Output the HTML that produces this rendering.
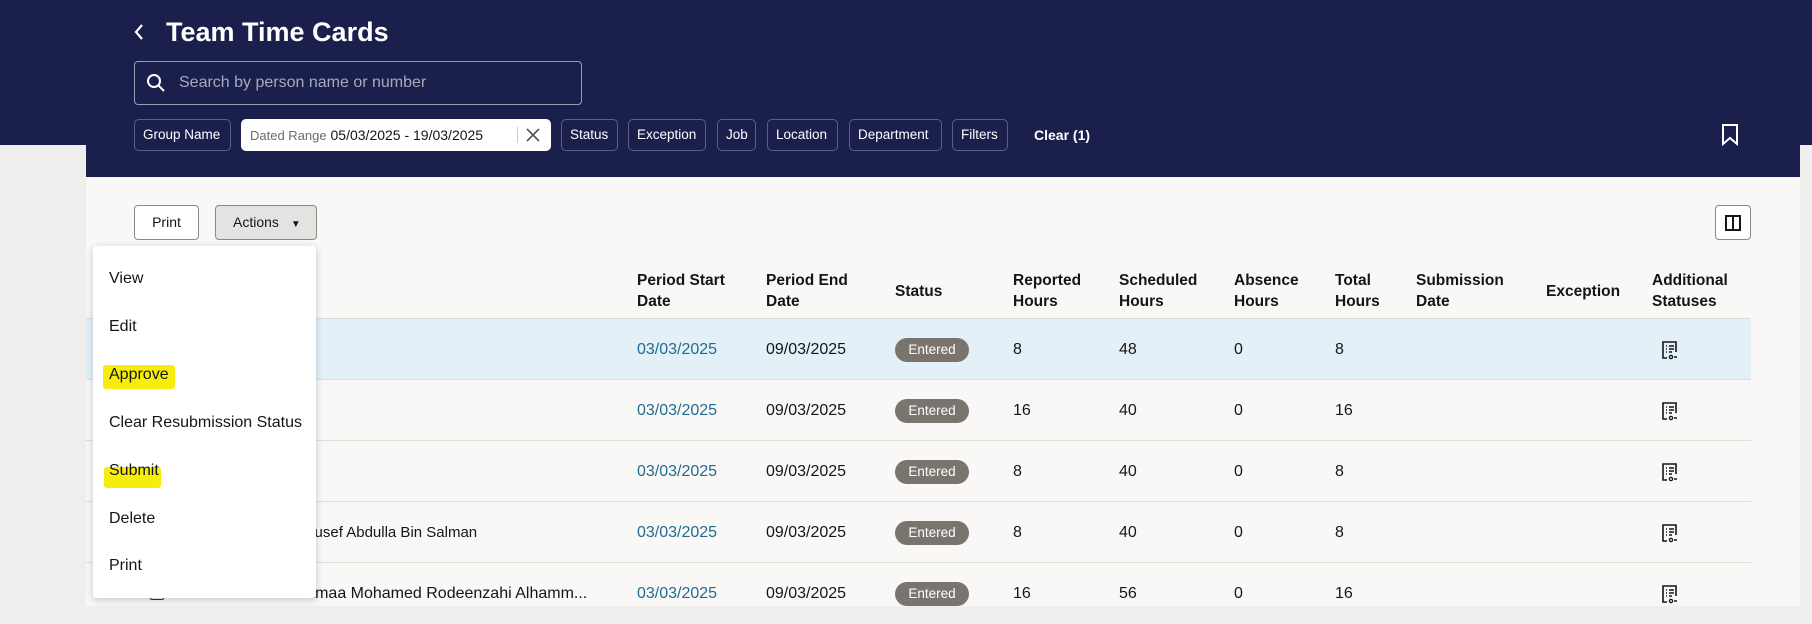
<!DOCTYPE html>
<html><head><meta charset="utf-8"><style>
*{margin:0;padding:0;box-sizing:border-box}
body{width:1812px;height:606px;overflow:hidden;background:#efeeec;font-family:"Liberation Sans",sans-serif;position:relative;color:#161513}
.a{position:absolute;white-space:nowrap}
.hdr{left:0;top:0;width:1812px;height:145px;background:#1a1f4c}
.panel{left:86px;top:145px;width:1714px;height:461px;background:#f9f8f6}
.hdr2{left:86px;top:145px;width:1714px;height:32px;background:#1a1f4c}
.chip{top:119px;height:32px;border:1px solid #5b6085;border-radius:5px;color:#fff;font-size:13.5px;line-height:30px;padding:0 8px}
.btn{top:205px;height:35px;border:1px solid #8b8985;border-radius:4px;font-size:14px;line-height:33px;text-align:center;background:#fff}
.th{font-size:15.5px;font-weight:bold;line-height:21px;color:#161513}
.row{left:86px;width:1665px;height:61px;border-bottom:1px solid #dfdedb}
.c{font-size:16px;line-height:20px}
.lnk{color:#1f6c91}
.badge{width:74px;height:24px;border-radius:12px;background:#7a746e;color:#fff;font-size:13.5px;line-height:24px;text-align:center}
.menu{left:93px;top:246px;width:223px;height:352px;background:#fff;border-radius:3px;box-shadow:0 2px 8px rgba(0,0,0,.2)}
.mi{left:109px;font-size:16px;line-height:20px}
.hl{background:#f7ed0c}
</style></head><body>
<div class="a hdr"></div>
<div class="a panel"></div>
<div class="a hdr2"></div>
<svg class="a" style="left:133px;top:23px" width="12" height="18" viewBox="0 0 12 18"><path d="M9 2L3 9l6 7" stroke="#fff" stroke-width="2.2" fill="none"/></svg>
<div class="a" style="left:166px;top:16px;font-size:27px;font-weight:bold;color:#fff;line-height:32px">Team Time Cards</div>
<div class="a" style="left:134px;top:61px;width:448px;height:44px;border:1px solid #9a9cb0;border-radius:4px"></div>
<svg class="a" style="left:146px;top:73px" width="20" height="20" viewBox="0 0 20 20"><circle cx="8" cy="8" r="6" stroke="#fff" stroke-width="2" fill="none"/><path d="M12.5 12.5L18 18" stroke="#fff" stroke-width="2"/></svg>
<div class="a" style="left:179px;top:73px;font-size:16px;color:#a7a9bd;line-height:20px">Search by person name or number</div>
<div class="a chip" style="left:134px;width:97px">Group Name</div>
<div class="a chip" style="left:241px;width:310px;background:#fff;border-color:#fff;color:#161513;font-size:14px"><span style="color:#6f6c68;font-size:13px">Dated Range</span> 05/03/2025 - 19/03/2025</div>
<div class="a" style="left:517px;top:127px;width:1px;height:16px;background:#ccc"></div>
<svg class="a" style="left:525px;top:127px" width="16" height="16" viewBox="0 0 16 16"><path d="M2 2l12 12M14 2L2 14" stroke="#555" stroke-width="1.6"/></svg>
<div class="a chip" style="left:561px;width:57px">Status</div>
<div class="a chip" style="left:628px;width:78px">Exception</div>
<div class="a chip" style="left:717px;width:39px">Job</div>
<div class="a chip" style="left:767px;width:71px">Location</div>
<div class="a chip" style="left:849px;width:93px">Department</div>
<div class="a chip" style="left:952px;width:56px">Filters</div>
<div class="a" style="left:1034px;top:126px;color:#fff;font-size:14px;font-weight:bold;line-height:18px">Clear (1)</div>
<svg class="a" style="left:1721px;top:124px" width="18" height="22" viewBox="0 0 18 22"><path d="M2 1h14v19l-7-6-7 6z" stroke="#fff" stroke-width="2" fill="none"/></svg>
<div class="a btn" style="left:134px;width:65px">Print</div>
<div class="a btn" style="left:215px;width:102px;background:#e4e3e1;text-align:left;padding-left:17px">Actions <span style="font-size:10px;margin-left:8px">▼</span></div>
<div class="a btn" style="left:1715px;width:36px"></div>
<svg class="a" style="left:1724px;top:214px" width="18" height="18" viewBox="0 0 18 18"><rect x="2" y="2" width="14" height="14" stroke="#161513" stroke-width="2" fill="none"/><path d="M9 2v14" stroke="#161513" stroke-width="2"/></svg>
<div class="a th" style="left:637px;top:270px">Period Start<br>Date</div>
<div class="a th" style="left:766px;top:270px">Period End<br>Date</div>
<div class="a th" style="left:895px;top:281px">Status</div>
<div class="a th" style="left:1013px;top:270px">Reported<br>Hours</div>
<div class="a th" style="left:1119px;top:270px">Scheduled<br>Hours</div>
<div class="a th" style="left:1234px;top:270px">Absence<br>Hours</div>
<div class="a th" style="left:1335px;top:270px">Total<br>Hours</div>
<div class="a th" style="left:1416px;top:270px">Submission<br>Date</div>
<div class="a th" style="left:1546px;top:281px">Exception</div>
<div class="a th" style="left:1652px;top:270px">Additional<br>Statuses</div>
<div class="a" style="left:86px;top:318px;width:1665px;height:1px;background:#dfdedb"></div>
<div class="a row" style="top:319px;background:#e3f0f7"></div>
<div class="a row" style="top:380px"></div>
<div class="a row" style="top:441px"></div>
<div class="a row" style="top:502px"></div>
<div class="a row" style="top:563px;border:none"></div>

<div class="a c" style="left:277px;top:523px;font-size:15px">Ali Yousef Abdulla Bin Salman</div>
<div class="a" style="left:150px;top:586px;width:14px;height:14px;border:1.5px solid #333;border-radius:2px"></div>
<div class="a c" style="left:195px;top:584px">Abdulhameed Jamaa Mohamed Rodeenzahi Alhamm...</div>

<div class="a c lnk" style="left:637px;top:340px">03/03/2025</div><div class="a c" style="left:766px;top:340px">09/03/2025</div><div class="a badge" style="left:895px;top:338px">Entered</div><div class="a c" style="left:1013px;top:340px">8</div><div class="a c" style="left:1119px;top:340px">48</div><div class="a c" style="left:1234px;top:340px">0</div><div class="a c" style="left:1335px;top:340px">8</div>
<div class="a c lnk" style="left:637px;top:401px">03/03/2025</div><div class="a c" style="left:766px;top:401px">09/03/2025</div><div class="a badge" style="left:895px;top:399px">Entered</div><div class="a c" style="left:1013px;top:401px">16</div><div class="a c" style="left:1119px;top:401px">40</div><div class="a c" style="left:1234px;top:401px">0</div><div class="a c" style="left:1335px;top:401px">16</div>
<div class="a c lnk" style="left:637px;top:462px">03/03/2025</div><div class="a c" style="left:766px;top:462px">09/03/2025</div><div class="a badge" style="left:895px;top:460px">Entered</div><div class="a c" style="left:1013px;top:462px">8</div><div class="a c" style="left:1119px;top:462px">40</div><div class="a c" style="left:1234px;top:462px">0</div><div class="a c" style="left:1335px;top:462px">8</div>
<div class="a c lnk" style="left:637px;top:523px">03/03/2025</div><div class="a c" style="left:766px;top:523px">09/03/2025</div><div class="a badge" style="left:895px;top:521px">Entered</div><div class="a c" style="left:1013px;top:523px">8</div><div class="a c" style="left:1119px;top:523px">40</div><div class="a c" style="left:1234px;top:523px">0</div><div class="a c" style="left:1335px;top:523px">8</div>
<div class="a c lnk" style="left:637px;top:584px">03/03/2025</div><div class="a c" style="left:766px;top:584px">09/03/2025</div><div class="a badge" style="left:895px;top:582px">Entered</div><div class="a c" style="left:1013px;top:584px">16</div><div class="a c" style="left:1119px;top:584px">56</div><div class="a c" style="left:1234px;top:584px">0</div><div class="a c" style="left:1335px;top:584px">16</div>

<svg width="0" height="0" style="position:absolute"><defs><symbol id="ic" viewBox="0 0 18 20"><path d="M6 18H2V2h13v10" stroke="#161513" stroke-width="1.6" fill="none"/><path d="M5 6h1M8 6h5M5 9h1M8 9h5M5 12h1M8 12h3" stroke="#161513" stroke-width="1.5"/><circle cx="10" cy="17" r="1.6" stroke="#161513" stroke-width="1.3" fill="none"/><path d="M13 17h3" stroke="#161513" stroke-width="1.5"/></symbol></defs></svg>
<svg class="a" style="left:1661px;top:340px" width="18" height="20"><use href="#ic"/></svg>
<svg class="a" style="left:1661px;top:401px" width="18" height="20"><use href="#ic"/></svg>
<svg class="a" style="left:1661px;top:462px" width="18" height="20"><use href="#ic"/></svg>
<svg class="a" style="left:1661px;top:523px" width="18" height="20"><use href="#ic"/></svg>
<svg class="a" style="left:1661px;top:584px" width="18" height="20"><use href="#ic"/></svg>

<div class="a menu"></div>
<div class="a hl" style="left:103px;top:365px;width:72px;height:24px;border-radius:3px"></div>
<div class="a hl" style="left:104px;top:467px;width:57px;height:21px;border-radius:3px"></div>
<div class="a mi" style="top:269px">View</div>
<div class="a mi" style="top:317px">Edit</div>
<div class="a mi" style="top:365px">Approve</div>
<div class="a mi" style="top:413px">Clear Resubmission Status</div>
<div class="a mi" style="top:461px">Submit</div>
<div class="a mi" style="top:509px">Delete</div>
<div class="a mi" style="top:556px">Print</div>
</body></html>
